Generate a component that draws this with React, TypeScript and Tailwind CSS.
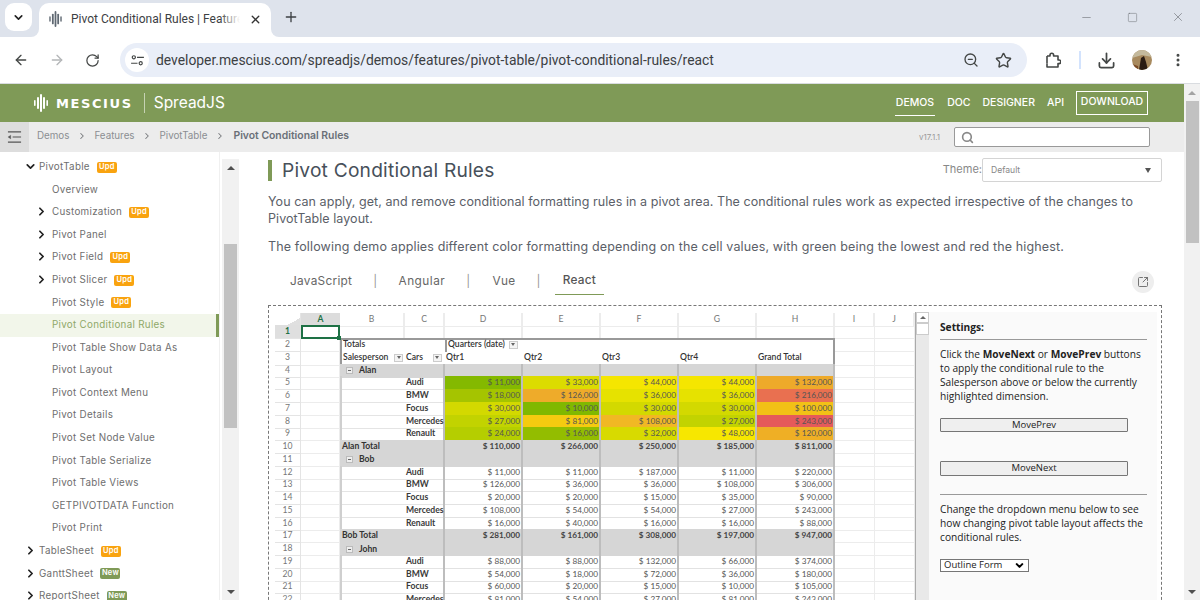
import React from "react";
import { ArrowLeft, ArrowRight, RotateCw, ZoomOut, Star, Download, MoreVertical, Plus, X, ChevronDown, ChevronRight, Minus, Square, Search, SquareArrowOutUpRight } from "lucide-react";

const UI = "font-['Inter','Liberation_Sans',sans-serif]";

function Wave({ cls }: { cls: string }) {
  return (
    <svg viewBox="0 0 14 18" className={cls} fill="currentColor">
      <rect x="0" y="6" width="1.6" height="6" rx=".8" />
      <rect x="3" y="3" width="2" height="12" rx="1" />
      <rect x="6" y="0" width="2" height="18" rx="1" />
      <rect x="9" y="3" width="2" height="12" rx="1" />
      <rect x="12.4" y="6" width="1.6" height="6" rx=".8" />
    </svg>
  );
}

function TabStrip() {
  return (
    <div className="h-[37px] bg-[#dee3ec] flex items-start pt-[3px] pl-[5px]">
      <div className="w-[27px] h-[28px] bg-white rounded-[9px] flex items-center justify-center">
        <ChevronDown size={13} strokeWidth={3} className="text-[#222]" />
      </div>
      <div className="relative ml-[7px] w-[232px] h-[34px] bg-white rounded-t-[10px] flex items-center pl-[10px] pb-[2px]">
        <div className="absolute -left-[8px] bottom-0 w-[8px] h-[8px] bg-white">
          <div className="w-full h-full bg-[#dee3ec] rounded-br-[8px]" />
        </div>
        <div className="absolute -right-[8px] bottom-0 w-[8px] h-[8px] bg-white">
          <div className="w-full h-full bg-[#dee3ec] rounded-bl-[8px]" />
        </div>
        <Wave cls="w-[13px] h-[16px] text-[#5f6872]" />
        <div className="relative ml-[9px] w-[169px] overflow-hidden whitespace-nowrap text-[12px] text-[#3c4043] font-['Roboto',sans-serif]">
          Pivot Conditional Rules | Features | SpreadJS
          <div className="absolute right-0 top-0 h-full w-[20px] bg-gradient-to-r from-transparent to-white" />
        </div>
        <X size={13} strokeWidth={2.5} className="ml-[9px] text-[#333]" />
      </div>
      <Plus size={16} strokeWidth={2} className="ml-[12px] mt-[6px] text-[#3c4043]" />
      <div className="flex-1" />
      <Minus size={13} strokeWidth={1} className="mt-[8px] text-[#5f6368]" />
      <Square size={11} strokeWidth={1} className="ml-[34px] mt-[9px] text-[#5f6368]" />
      <X size={14} strokeWidth={1} className="ml-[33px] mr-[15px] mt-[7px] text-[#5f6368]" />
    </div>
  );
}

function Toolbar() {
  return (
    <div className="h-[47px] bg-white border-b border-[#d9dce0] flex items-center text-[#444746]">
      <ArrowLeft size={16} strokeWidth={2} className="ml-[13px]" />
      <ArrowRight size={16} strokeWidth={2} className="ml-[20px] text-[#b4b6b8]" />
      <RotateCw size={15} strokeWidth={2} className="ml-[20px]" />
      <div className="ml-[20px] w-[907px] h-[34px] rounded-full bg-[#e9eef8] flex items-center">
        <div className="ml-[5px] w-[24px] h-[24px] rounded-full bg-white flex items-center justify-center">
          <svg viewBox="0 0 14 12" className="w-[13px] h-[11px]" fill="none" stroke="#444746" strokeWidth="1.3">
            <circle cx="3" cy="2.5" r="1.7" />
            <path d="M6.5 2.5H14M0 9H7" />
            <circle cx="10.5" cy="9" r="1.7" />
          </svg>
        </div>
        <span className="ml-[7px] text-[13.85px] text-[#3c4043] font-['Roboto',sans-serif] whitespace-nowrap">developer.mescius.com/spreadjs/demos/features/pivot-table/pivot-conditional-rules/react</span>
        <div className="flex-1" />
        <ZoomOut size={16} strokeWidth={2} className="mr-[16px]" />
        <Star size={17} strokeWidth={2} className="mr-[15px]" />
      </div>
      <svg viewBox="0 0 16 16" className="ml-[18px] w-[16px] h-[16px]" fill="none" stroke="#444746" strokeWidth="1.6" strokeLinejoin="round">
        <path d="M2 4h3V3a1.8 1.8 0 0 1 3.6 0v1H13v4h1a1.8 1.8 0 0 1 0 3.6h-1V15H2v-3.5" />
        <path d="M2 4v7.5" />
      </svg>
      <div className="ml-[18px] w-[2px] h-[18px] bg-[#d3e3fd]" />
      <Download size={19} strokeWidth={2.2} className="ml-[16px]" />
      <svg viewBox="0 0 20 20" className="ml-[16px] w-[20px] h-[20px]">
        <defs>
          <clipPath id="av"><circle cx="10" cy="10" r="10" /></clipPath>
        </defs>
        <g clipPath="url(#av)">
          <rect width="20" height="20" fill="#a88a5e" />
          <path d="M0 0h20v7L10 5 0 8z" fill="#c4b99c" />
          <path d="M7 20l2-12 3-2 2 6 2 8z" fill="#2a1b12" />
          <path d="M0 14l6 2v4H0z" fill="#7a4a26" />
        </g>
      </svg>
      <MoreVertical size={16} strokeWidth={2.5} className="ml-[18px]" />
    </div>
  );
}

function PageHeader() {
  return (
    <div className="h-[38px] bg-[#7f9a57] flex items-center text-white pl-[34px]">
      <Wave cls="w-[14px] h-[18px] text-white" />
      <span className="ml-[8px] text-[13px] font-bold tracking-[1.6px] font-['DejaVu_Sans',sans-serif] leading-none">MESCIUS</span>
      <div className="ml-[11px] w-px h-[20px] bg-[#c6d2b3]" />
      <span className={`ml-[9px] text-[15.5px] ${UI}`}>SpreadJS</span>
      <div className="flex-1" />
      <div className={`flex items-center text-[10.5px] font-medium ${UI}`}>
        <span className="border-b border-white pb-[4px] pt-[5px] px-px">DEMOS</span>
        <span className="ml-[12px]">DOC</span>
        <span className="ml-[12px]">DESIGNER</span>
        <span className="ml-[12px]">API</span>
        <span className="ml-[12px] mr-[36px] h-[24px] w-[72px] border border-white flex items-center justify-center pb-[2px]">DOWNLOAD</span>
      </div>
    </div>
  );
}

function Breadcrumb() {
  const Sep = () => <ChevronRight size={10} strokeWidth={2.5} className="mx-[7.5px] text-[#77797c]" />;
  return (
    <div className={`h-[30px] bg-[#ececec] flex items-center text-[9.8px] text-[#8b8e92] ${UI}`}>
      <div className="w-[29px] h-full bg-[#dddddd] flex items-center justify-center">
        <svg viewBox="0 0 16 14" className="w-[15px] h-[14px]" stroke="#555" strokeWidth="1.3" fill="#555">
          <path d="M1 1.5h14M6 7h9M1 12.5h14" />
          <path d="M1 7l3-2v4z" strokeWidth=".3" />
        </svg>
      </div>
      <div className="flex items-center pb-[2px]">
        <span className="ml-[8px]">Demos</span><Sep />
        <span>Features</span><Sep />
        <span>PivotTable</span><Sep />
        <span className="ml-[1px] text-[10.4px] font-semibold text-[#6a7078]">Pivot Conditional Rules</span>
      </div>
      <div className="flex-1" />
      <span className="text-[8px] text-[#9a9a9a] mr-[14px]">v17.1.1</span>
      <div className="w-[196px] h-[20px] mr-[34px] bg-white border border-[#999] rounded-[2px] flex items-center pl-[6px]">
        <Search size={13} strokeWidth={3} className="text-[#888]" />
      </div>
    </div>
  );
}

const Badge = ({ t }: { t: string }) => (
  <span className={`ml-[7px] h-[11px] w-[20px] text-center rounded-[2px] text-[7.5px] leading-[10px] font-semibold text-white ${t === "New" ? "bg-[#7f9a57]" : "bg-[#f9a30f]"}`}>{t}</span>
);

type Item = { t: string; x: number; ch?: "r" | "d"; b?: string; a?: boolean };
const items: Item[] = [
  { t: "PivotTable", x: 0, ch: "d", b: "Upd" },
  { t: "Overview", x: 1 },
  { t: "Customization", x: 1, ch: "r", b: "Upd" },
  { t: "Pivot Panel", x: 1, ch: "r" },
  { t: "Pivot Field", x: 1, ch: "r", b: "Upd" },
  { t: "Pivot Slicer", x: 1, ch: "r", b: "Upd" },
  { t: "Pivot Style", x: 1, b: "Upd" },
  { t: "Pivot Conditional Rules", x: 1, a: true },
  { t: "Pivot Table Show Data As", x: 1 },
  { t: "Pivot Layout", x: 1 },
  { t: "Pivot Context Menu", x: 1 },
  { t: "Pivot Details", x: 1 },
  { t: "Pivot Set Node Value", x: 1 },
  { t: "Pivot Table Serialize", x: 1 },
  { t: "Pivot Table Views", x: 1 },
  { t: "GETPIVOTDATA Function", x: 1 },
  { t: "Pivot Print", x: 1 },
  { t: "TableSheet", x: 0, ch: "r", b: "Upd" },
  { t: "GanttSheet", x: 0, ch: "r", b: "New" },
  { t: "ReportSheet", x: 0, ch: "r", b: "New" },
];

function Sidebar() {
  return (
    <div className={`w-[239px] shrink-0 flex h-[448px] overflow-hidden ${UI}`}>
      <div className="w-[220px] pt-[4px] border-r border-[#f0f0f0]">
        {items.map((i) => (
          <div key={i.t} className={`h-[22.6px] flex items-center text-[9.8px] tracking-[0.3px] ${i.a ? "bg-[#f2f6ea] text-[#8fa868] border-r-[3px] border-[#7f9a57]" : "text-[#6e6e6e]"} ${i.x ? "pl-[52px]" : "pl-[39px]"}`}>
            <span className="relative whitespace-nowrap">
              {i.ch === "r" && <ChevronRight size={13} strokeWidth={3.2} className={`absolute top-[0px] text-[#222] ${i.x ? "-left-[17px]" : "-left-[15px]"}`} />}
              {i.ch === "d" && <ChevronDown size={13} strokeWidth={3.2} className="absolute top-[0px] -left-[15px] text-[#222]" />}
              {i.t}
            </span>
            {i.b && <Badge t={i.b} />}
          </div>
        ))}
      </div>
      <div className="w-[17px] ml-[2px] mt-[7px] bg-[#f1f1f1] flex flex-col items-center">
        <div className="h-[17px] flex items-center justify-center"><div className="border-x-[4px] border-x-transparent border-b-[4px] border-b-[#505050]" /></div>
        <div className="mt-[68px] w-[13px] h-[184px] bg-[#c1c1c1]" />
        <div className="flex-1" />
        <div className="h-[17px] flex items-center justify-center"><div className="border-x-[4px] border-x-transparent border-t-[4px] border-t-[#505050]" /></div>
      </div>
    </div>
  );
}

const color: Record<string, string> = {
  "11": "bg-[#84b900]", "33": "bg-[#dcdc00]", "44": "bg-[#f5e600]", "132": "bg-[#eeaa2a]",
  "18": "bg-[#a5c400]", "126": "bg-[#eeab2a]", "36": "bg-[#e6e200]", "216": "bg-[#e97050]",
  "30": "bg-[#d3d900]", "10": "bg-[#80b800]", "100": "bg-[#f2c116]", "27": "bg-[#c2d300]",
  "81": "bg-[#f5cb10]", "108": "bg-[#f1b824]", "243": "bg-[#e55a5a]", "24": "bg-[#b5ce00]",
  "16": "bg-[#93bd00]", "32": "bg-[#d8da00]", "48": "bg-[#f7e700]", "120": "bg-[#efaf25]",
};

const GRID = "grid grid-cols-[26px_39px_65px_40px_78px_78px_78px_78px_78px_40px_40px] h-[12.75px] leading-[13px]";
const LINE = "border-r border-b border-[#ececec]";
const HEAD = "text-center text-[#777] border-r-2 border-b border-[#ececec]";

function Blank() { return <div className={LINE} />; }
function Tail() { return <><Blank /><Blank /></>; }
function RowNum({ n, on }: { n: number; on?: boolean }) {
  return <div className={`text-center border-r border-b border-[#e4e4e4] ${on ? "bg-[#dfdfdf] text-[#1e7145] font-bold" : "text-[#777]"}`}>{n}</div>;
}

const Filter = ({ cls }: { cls: string }) => (
  <span className={`inline-flex w-[9px] h-[8px] border border-[#ccc] bg-[#f4f4f4] items-center justify-center align-middle ${cls}`}>
    <span className="border-x-[2.5px] border-x-transparent border-t-[3px] border-t-[#666]" />
  </span>
);

const fmt = (v: number) => `$ ${v},000`;

function Data({ n, car, vals, heat }: { n: number; car: string; vals: number[]; heat?: boolean }) {
  return (
    <div className={GRID}>
      <RowNum n={n} />
      <Blank />
      <div className="border-l-2 border-[#cfcfcf] border-b border-b-[#e4e4e4]" />
      <div className="border-b border-[#e4e4e4] border-r-2 border-r-[#bdbdbd] pl-px font-bold text-[#3a3a3a] whitespace-nowrap">{car}</div>
      {vals.map((v, i) => (
        <div key={i} className={`text-right pr-[1px] text-[8.2px] text-[#555] border-b border-[#e2e2e2] border-r-2 border-r-[#bdbdbd] ${heat ? color[String(v)] : ""}`}>{fmt(v)}</div>
      ))}
      <Tail />
    </div>
  );
}

function Group({ n, name }: { n: number; name: string }) {
  return (
    <div className={GRID}>
      <RowNum n={n} />
      <Blank />
      <div className="col-span-2 bg-[#d6d6d6] border-r-2 border-[#bdbdbd] flex items-center pl-[6px] font-bold text-[#333]">
        <span className="w-[7px] h-[7px] bg-[#eeeeee] border border-[#bbb] flex items-center justify-center mr-[6px]"><span className="w-[3px] h-px bg-[#666]" /></span>
        {name}
      </div>
      {[0, 1, 2, 3, 4].map((i) => <div key={i} className="bg-[#d6d6d6] border-r-2 border-[#bdbdbd]" />)}
      <Tail />
    </div>
  );
}

function Total({ n, name, vals }: { n: number; name: string; vals: number[] }) {
  return (
    <div className={GRID}>
      <RowNum n={n} />
      <Blank />
      <div className="col-span-2 bg-[#d6d6d6] border-r-2 border-[#bdbdbd] pl-[2px] font-bold text-[#333]">{name}</div>
      {vals.map((v, i) => <div key={i} className="bg-[#d6d6d6] border-r-2 border-[#bdbdbd] text-right pr-[1px] text-[8.2px] font-bold text-[#444]">{fmt(v)}</div>)}
      <Tail />
    </div>
  );
}

function Sheet() {
  return (
    <div className="w-[640px] shrink-0 pt-[1px] font-['Lato',sans-serif] text-[8.6px] overflow-hidden">
      <div className={GRID}>
        <div className="border-b border-r border-[#e4e4e4] bg-gradient-to-br from-white from-70% to-[#e0e0e0] to-70%" />
        <div className="text-center bg-[#dcdcdc] text-[#1e7145] font-bold border-b border-[#e4e4e4]">A</div>
        {["B", "C", "D", "E", "F", "G", "H", "I", "J"].map((c) => <div key={c} className={HEAD}>{c}</div>)}
      </div>
      <div className={GRID}>
        <RowNum n={1} on />
        <div className="relative border-2 border-[#1e7145] bg-white">
          <div className="absolute -right-[3px] -bottom-[3px] w-[4px] h-[4px] bg-[#1e7145]" />
        </div>
        {[0, 1, 2, 3, 4, 5, 6].map((i) => <div key={i} className="border-r-2 border-b border-[#ececec]" />)}
        <Tail />
      </div>
      <div className={GRID}>
        <RowNum n={2} />
        <Blank />
        <div className="col-span-2 border-t-2 border-l-2 border-[#999] pl-px text-[#333] font-semibold leading-[9px]">Totals</div>
        <div className="col-span-5 border-t-2 border-r-2 border-l-2 border-[#999] pl-px text-[#333] font-semibold whitespace-nowrap leading-[9px]">Quarters (date)<Filter cls="ml-[4px]" /></div>
        <Tail />
      </div>
      <div className={GRID}>
        <RowNum n={3} />
        <Blank />
        <div className="border-l-2 border-b-2 border-[#999] pl-px text-[#333] font-semibold whitespace-nowrap">Salesperson<Filter cls="ml-[6px]" /></div>
        <div className="border-b-2 border-[#999] pl-px text-[#333] font-semibold whitespace-nowrap">Cars<Filter cls="ml-[10px]" /></div>
        {["Qtr1", "Qtr2", "Qtr3", "Qtr4"].map((q) => <div key={q} className="border-b-2 border-[#999] pl-px text-[#333] font-semibold">{q}</div>)}
        <div className="border-b-2 border-r-2 border-[#999] pl-px text-[#333] font-semibold">Grand Total</div>
        <Tail />
      </div>
      <Group n={4} name="Alan" />
      <Data n={5} car="Audi" heat vals={[11, 33, 44, 44, 132]} />
      <Data n={6} car="BMW" heat vals={[18, 126, 36, 36, 216]} />
      <Data n={7} car="Focus" heat vals={[30, 10, 30, 30, 100]} />
      <Data n={8} car="Mercedes" heat vals={[27, 81, 108, 27, 243]} />
      <Data n={9} car="Renault" heat vals={[24, 16, 32, 48, 120]} />
      <Total n={10} name="Alan Total" vals={[110, 266, 250, 185, 811]} />
      <Group n={11} name="Bob" />
      <Data n={12} car="Audi" vals={[11, 11, 187, 11, 220]} />
      <Data n={13} car="BMW" vals={[126, 36, 36, 108, 306]} />
      <Data n={14} car="Focus" vals={[20, 20, 15, 35, 90]} />
      <Data n={15} car="Mercedes" vals={[108, 54, 54, 27, 243]} />
      <Data n={16} car="Renault" vals={[16, 40, 16, 16, 88]} />
      <Total n={17} name="Bob Total" vals={[281, 161, 308, 197, 947]} />
      <Group n={18} name="John" />
      <Data n={19} car="Audi" vals={[88, 88, 132, 66, 374]} />
      <Data n={20} car="BMW" vals={[54, 18, 72, 36, 180]} />
      <Data n={21} car="Focus" vals={[60, 20, 15, 10, 105]} />
      <Data n={22} car="Mercedes" vals={[81, 54, 27, 81, 243]} />
    </div>
  );
}

function Settings() {
  return (
    <div className="w-[228px] shrink-0 bg-[#fafafa] pl-[11px] pt-[8px] text-[10.2px] leading-[14px] text-[#222] font-['Open_Sans',sans-serif]">
      <div className="font-bold">Settings:</div>
      <div className="mt-[5px] w-[207px] h-px bg-[#999]" />
      <p className="mt-[7px] w-[207px]">Click the <b>MoveNext</b> or <b>MovePrev</b> buttons to apply the conditional rule to the Salesperson above or below the currently highlighted dimension.</p>
      <button className="mt-[15px] block w-[188px] h-[14px] bg-[#efefef] border border-[#767676] rounded-[1px] text-[9.5px] leading-[12px]">MovePrev</button>
      <button className="mt-[29px] block w-[188px] h-[15px] bg-[#efefef] border border-[#767676] rounded-[1px] text-[9.5px] leading-[12px]">MoveNext</button>
      <div className="mt-[18px] w-[207px] h-px bg-[#999]" />
      <p className="mt-[7px] w-[207px]">Change the dropdown menu below to see how changing pivot table layout affects the conditional rules.</p>
      <div className="mt-[15px] w-[89px] h-[13px] bg-white border border-[#767676] flex items-center pl-[3px] text-[9.5px]">
        Outline Form
        <div className="flex-1" />
        <ChevronDown size={11} strokeWidth={4.5} className="mr-[3px] text-black" />
      </div>
    </div>
  );
}

function Main() {
  return (
    <div className={`flex-1 h-[448px] overflow-hidden pl-[29px] pr-[22px] text-[#5b6068] ${UI}`}>
      <div className="relative flex items-center h-[21px] mt-[8px] border-l-[4px] border-[#7f9a57]">
        <span className="ml-[10px] text-[19.2px] text-[#47505a] tracking-[0.2px]">Pivot Conditional Rules</span>
        <div className="flex-1" />
        <span className="text-[11px] text-[#888] -mt-[2px]">Theme:</span>
        <div className="w-[180px] h-[24px] bg-white border border-[#d4d4d4] rounded-[2px] flex items-center justify-between pl-[8px] pr-[10px] text-[8.6px] text-[#888] -mt-[1px]">
          Default
          <span className="border-x-[3.5px] border-x-transparent border-t-[5px] border-t-[#555]" />
        </div>
      </div>
      <p className="mt-[12px] text-[12.5px] leading-[17px] tracking-[0.06px]">You can apply, get, and remove conditional formatting rules in a pivot area. The conditional rules work as expected irrespective of the changes to PivotTable layout.</p>
      <p className="mt-[11px] text-[12.5px] leading-[17px] tracking-[0.14px] whitespace-nowrap">The following demo applies different color formatting depending on the cell values, with green being the lowest and red the highest.</p>
      <div className="mt-[13.5px] flex items-center h-[26px] text-[11.8px] text-[#666] tracking-[0.3px]">
        <span className="ml-[22px]">JavaScript</span>
        <span className="ml-[21px] text-[#999]">|</span>
        <span className="ml-[21px] tracking-[0.5px]">Angular</span>
        <span className="ml-[21px] text-[#999]">|</span>
        <span className="ml-[22px]">Vue</span>
        <span className="ml-[21px] text-[#999]">|</span>
        <span className="ml-[14px] px-[8px] h-full flex items-center border-b border-[#7f9a57] text-[#555] font-medium">React</span>
        <div className="flex-1" />
        <div className="w-[22px] h-[22px] mr-[8px] rounded-full bg-[#eeeeee] flex items-center justify-center">
          <SquareArrowOutUpRight size={12} strokeWidth={1.8} className="text-[#666]" />
        </div>
      </div>
      <div className="mt-[10px] w-[894px] h-[310px] border border-dashed border-[#777] pl-[6px] pt-[6px] flex overflow-hidden">
        <Sheet />
        <div className="w-[14px] shrink-0 bg-[#e9e9e9] border-l border-[#aaa]">
          <div className="h-[11px] bg-white border border-[#ccc] flex items-center justify-center"><div className="border-x-[3px] border-x-transparent border-b-[3px] border-b-[#666]" /></div>
          <div className="h-[12px] bg-white border border-[#ccc]" />
        </div>
        <Settings />
      </div>
    </div>
  );
}

function PageScroll() {
  return (
    <div className="w-[16px] shrink-0 h-full bg-[#f1f1f1] flex flex-col items-center">
      <div className="h-[17px] flex items-center justify-center"><div className="border-x-[4px] border-x-transparent border-b-[4px] border-b-[#a3a3a3]" /></div>
      <div className="w-[13px] h-[142px] bg-[#c1c1c1]" />
      <div className="flex-1" />
      <div className="h-[17px] flex items-center justify-center"><div className="border-x-[4px] border-x-transparent border-t-[4px] border-t-[#505050]" /></div>
    </div>
  );
}

export default function App() {
  return (
    <div className="w-[1200px] h-[600px] overflow-hidden bg-white">
      <TabStrip />
      <Toolbar />
      <div className="flex h-[516px]">
        <div className="w-[1184px] shrink-0">
          <PageHeader />
          <Breadcrumb />
          <div className="flex">
            <Sidebar />
            <Main />
          </div>
        </div>
        <PageScroll />
      </div>
    </div>
  );
}
